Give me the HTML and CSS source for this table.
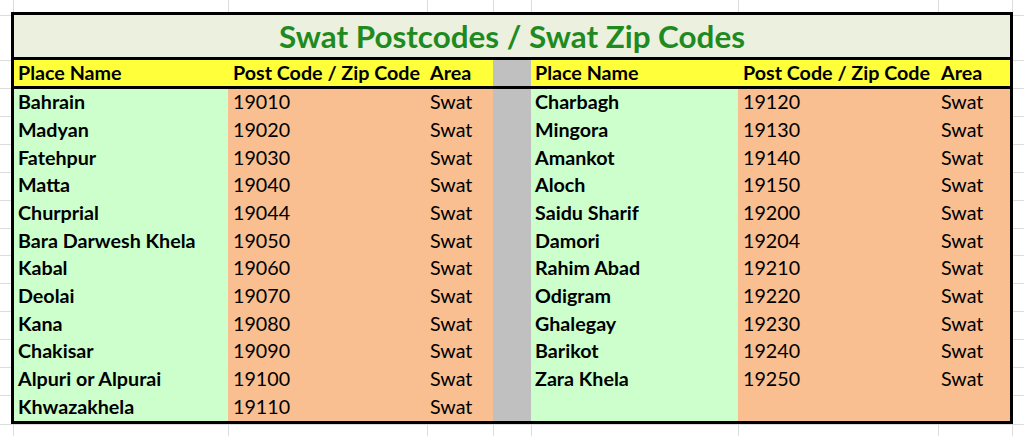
FILE: index.html
```html
<!DOCTYPE html>
<html lang="en">
<head>
<meta charset="utf-8">
<title>Swat Postcodes / Swat Zip Codes</title>
<link rel="stylesheet" href="styles.css">
</head>
<body>
<div class="sheet">
  <div class="title">Swat Postcodes / Swat Zip Codes</div>
  <div class="grid head">
    <div class="c">Place Name</div>
    <div class="c pc">Post Code / Zip Code</div>
    <div class="c ar">Area</div>
    <div class="c gap"></div>
    <div class="c">Place Name</div>
    <div class="c pc">Post Code / Zip Code</div>
    <div class="c ar">Area</div>
  </div>
  <div class="grid body">
    <div class="c nm">Bahrain</div><div class="c pc or">19010</div><div class="c ar or">Swat</div><div class="c gap"></div><div class="c nm">Charbagh</div><div class="c pc or">19120</div><div class="c ar or">Swat</div>
    <div class="c nm">Madyan</div><div class="c pc or">19020</div><div class="c ar or">Swat</div><div class="c gap"></div><div class="c nm">Mingora</div><div class="c pc or">19130</div><div class="c ar or">Swat</div>
    <div class="c nm">Fatehpur</div><div class="c pc or">19030</div><div class="c ar or">Swat</div><div class="c gap"></div><div class="c nm">Amankot</div><div class="c pc or">19140</div><div class="c ar or">Swat</div>
    <div class="c nm">Matta</div><div class="c pc or">19040</div><div class="c ar or">Swat</div><div class="c gap"></div><div class="c nm">Aloch</div><div class="c pc or">19150</div><div class="c ar or">Swat</div>
    <div class="c nm">Churprial</div><div class="c pc or">19044</div><div class="c ar or">Swat</div><div class="c gap"></div><div class="c nm">Saidu Sharif</div><div class="c pc or">19200</div><div class="c ar or">Swat</div>
    <div class="c nm">Bara Darwesh Khela</div><div class="c pc or">19050</div><div class="c ar or">Swat</div><div class="c gap"></div><div class="c nm">Damori</div><div class="c pc or">19204</div><div class="c ar or">Swat</div>
    <div class="c nm">Kabal</div><div class="c pc or">19060</div><div class="c ar or">Swat</div><div class="c gap"></div><div class="c nm">Rahim Abad</div><div class="c pc or">19210</div><div class="c ar or">Swat</div>
    <div class="c nm">Deolai</div><div class="c pc or">19070</div><div class="c ar or">Swat</div><div class="c gap"></div><div class="c nm">Odigram</div><div class="c pc or">19220</div><div class="c ar or">Swat</div>
    <div class="c nm">Kana</div><div class="c pc or">19080</div><div class="c ar or">Swat</div><div class="c gap"></div><div class="c nm">Ghalegay</div><div class="c pc or">19230</div><div class="c ar or">Swat</div>
    <div class="c nm">Chakisar</div><div class="c pc or">19090</div><div class="c ar or">Swat</div><div class="c gap"></div><div class="c nm">Barikot</div><div class="c pc or">19240</div><div class="c ar or">Swat</div>
    <div class="c nm">Alpuri or Alpurai</div><div class="c pc or">19100</div><div class="c ar or">Swat</div><div class="c gap"></div><div class="c nm">Zara Khela</div><div class="c pc or">19250</div><div class="c ar or">Swat</div>
    <div class="c nm">Khwazakhela</div><div class="c pc or">19110</div><div class="c ar or">Swat</div><div class="c gap"></div><div class="c nm"></div><div class="c pc or"></div><div class="c ar or"></div>
  </div>
</div>
</body>
</html>
```
FILE: styles.css
```css
html, body {
  margin: 0;
  padding: 0;
}
body {
  width: 1024px;
  height: 436px;
  overflow: hidden;
  font-family: Lato, "Open Sans", sans-serif;
  color: #000;
  background-color: #fff;
  background-image:
    linear-gradient(to right,
      transparent 13px, #dcdcdc 13px, #dcdcdc 14px, transparent 14px,
      transparent 228px, #dcdcdc 228px, #dcdcdc 229px, transparent 229px,
      transparent 427px, #dcdcdc 427px, #dcdcdc 428px, transparent 428px,
      transparent 493px, #dcdcdc 493px, #dcdcdc 494px, transparent 494px,
      transparent 531px, #dcdcdc 531px, #dcdcdc 532px, transparent 532px,
      transparent 738px, #dcdcdc 738px, #dcdcdc 739px, transparent 739px,
      transparent 938px, #dcdcdc 938px, #dcdcdc 939px, transparent 939px,
      transparent 1012px, #dcdcdc 1012px, #dcdcdc 1013px, transparent 1013px),
    linear-gradient(to bottom,
      transparent 15px, #dcdcdc 15px, #dcdcdc 16px, transparent 16px,
      transparent 60px, #dcdcdc 60px, #dcdcdc 61px, transparent 61px,
      transparent 88px, #dcdcdc 88px, #dcdcdc 89px, transparent 89px,
      transparent 116px, #dcdcdc 116px, #dcdcdc 117px, transparent 117px,
      transparent 144px, #dcdcdc 144px, #dcdcdc 145px, transparent 145px,
      transparent 172px, #dcdcdc 172px, #dcdcdc 173px, transparent 173px,
      transparent 200px, #dcdcdc 200px, #dcdcdc 201px, transparent 201px,
      transparent 228px, #dcdcdc 228px, #dcdcdc 229px, transparent 229px,
      transparent 255px, #dcdcdc 255px, #dcdcdc 256px, transparent 256px,
      transparent 283px, #dcdcdc 283px, #dcdcdc 284px, transparent 284px,
      transparent 311px, #dcdcdc 311px, #dcdcdc 312px, transparent 312px,
      transparent 339px, #dcdcdc 339px, #dcdcdc 340px, transparent 340px,
      transparent 367px, #dcdcdc 367px, #dcdcdc 368px, transparent 368px,
      transparent 395px, #dcdcdc 395px, #dcdcdc 396px, transparent 396px,
      transparent 424px, #dcdcdc 424px, #dcdcdc 425px, transparent 425px);
}
.sheet {
  margin: 12px 0 0 11px;
  width: 996px;
  border: 3px solid #000;
  background: #fff;
}
.title {
  height: 42px;
  line-height: 42px;
  background: #ebf1de;
  color: #1f8a1f;
  font-weight: 700;
  font-size: 31.4px;
  text-align: center;
  border-bottom: 3px solid #000;
}
.grid {
  display: grid;
  grid-template-columns: 214px 199px 66px 38px 207px 200px 72px;
}
.head {
  grid-auto-rows: 26px;
  background: #ffff3a;
  border-bottom: 3px solid #000;
  font-weight: 700;
}
.body {
  grid-auto-rows: 27.67px;
}
.c {
  font-size: 19.7px;
  padding-left: 4px;
  display: flex;
  align-items: center;
  white-space: nowrap;
}
.head .c {
  padding-bottom: 1px;
}
.body .c {
  padding-bottom: 2px;
}
.pc {
  padding-left: 5px;
}
.ar {
  padding-left: 3px;
}
.gap {
  background: #c0c0c0;
}
.nm {
  background: #ccffcc;
  font-weight: 700;
}
.or {
  background: #f9bf91;
}
```
